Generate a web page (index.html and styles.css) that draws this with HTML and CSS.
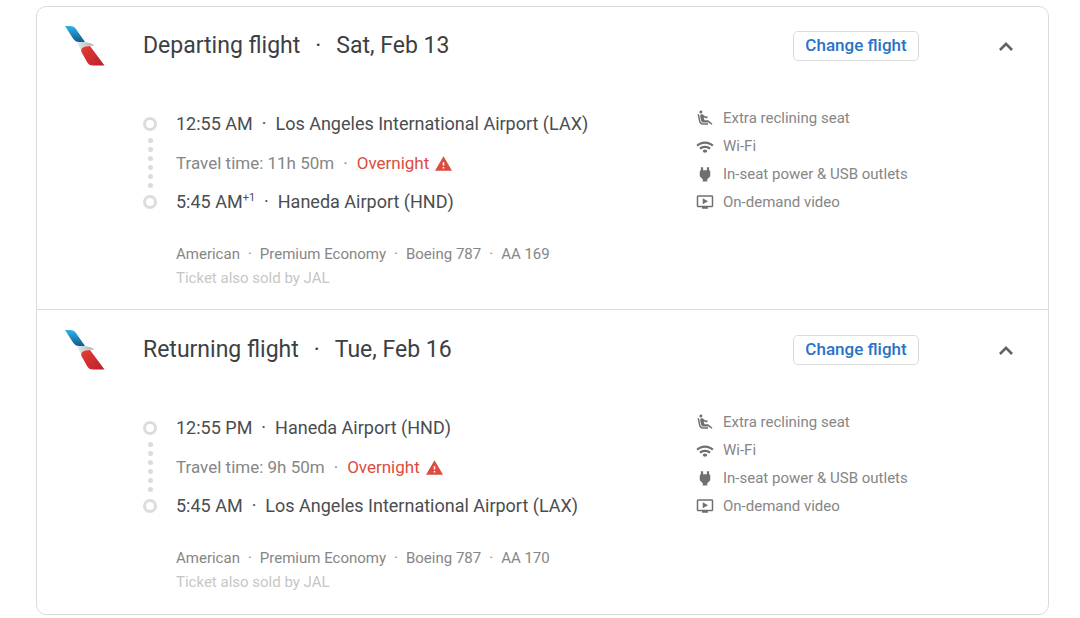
FILE: index.html
```html
<!DOCTYPE html>
<html lang="en">
<head>
    <meta charset="UTF-8">
    <meta name="viewport" content="width=device-width, initial-scale=1.0">
    <title>Selected flights</title>
    <link rel="stylesheet" href="styles.css">
</head>
<body>
    <!-- shared icons -->
    <svg class="sprite" width="0" height="0" aria-hidden="true">
        <defs>
            <linearGradient id="blue" x1="0" y1="0" x2="0" y2="1">
                <stop offset="0" stop-color="#2fb4e4"/>
                <stop offset="1" stop-color="#125a94"/>
            </linearGradient>
            <linearGradient id="red" x1="0" y1="0" x2="1" y2="1">
                <stop offset="0" stop-color="#e63e34"/>
                <stop offset="1" stop-color="#b8202a"/>
            </linearGradient>
            <linearGradient id="grey" x1="0" y1="0" x2="1" y2="0">
                <stop offset="0" stop-color="#e6e9ec"/>
                <stop offset="1" stop-color="#a4adb6"/>
            </linearGradient>
        </defs>
        <symbol id="logo" viewBox="0 0 40 40">
            <path fill="url(#blue)" d="M0 0h5c3 0 4.500 1 6 3l9 13h-6c-3 0-4-1-6-3.500z"/>
            <path fill="url(#grey)" d="M12 16.500c6-1 14-.500 17.500 3.500-5-.500-9 0-11 1.500-1 .800-2 2-2 3.500z"/>
            <path fill="url(#red)" d="M17 27c-2.500-4 1-7 8-7l14.500 19.500H28c-3 0-4.500-1-6-3.500z"/>
        </symbol>
        <symbol id="chevron" viewBox="0 0 24 24">
            <path d="M12 8l-7 7 1.900 1.900L12 11.800l5.100 5.100L19 15z"/>
        </symbol>
        <symbol id="warning" viewBox="1 2 22 19">
            <path d="M1 21h22L12 2 1 21zm12-3h-2v-2h2v2zm0-4h-2v-4h2v4z"/>
        </symbol>
        <symbol id="seat" viewBox="0 0 24 24">
            <path d="M5.350 5.640c-.900-.640-1.120-1.880-.490-2.790.630-.900 1.880-1.120 2.790-.490.900.640 1.120 1.880.490 2.790-.640.900-1.880 1.120-2.790.490zM16 19H8.930c-1.480 0-2.740-1.080-2.960-2.540L4 7H2l1.990 9.760C4.370 19.200 6.470 21 8.940 21H16v-2zm.230-4h-4.880l-1.030-4.100c1.580.890 3.280 1.540 5.150 1.220V9.990c-1.630.310-3.440-.270-4.690-1.250L9.140 7.470c-.230-.180-.490-.300-.760-.380-.320-.090-.660-.120-.990-.060h-.020c-1.230.220-2.050 1.390-1.840 2.610l1.350 5.920C7.160 16.980 8.390 18 9.830 18h6.850l3.820 3 1.500-1.500-5.770-4.500z"/>
        </symbol>
        <symbol id="wifi" viewBox="0 0 24 24">
            <path d="M12 6C7.500 6 3.500 7.700.500 10.500l2.100 2.100C5.100 10.300 8.400 9 12 9s6.900 1.300 9.400 3.600l2.100-2.100C20.500 7.700 16.500 6 12 6zm0 5.500c-3 0-5.700 1.100-7.700 3l2.100 2.100c1.500-1.300 3.400-2.100 5.600-2.100s4.100.800 5.600 2.100l2.100-2.100c-2-1.900-4.700-3-7.700-3zM12 16.500c-1.600 0-2.900 1-2.900 2.300S10.400 21 12 21s2.900-.900 2.900-2.200-1.300-2.300-2.900-2.300z"/>
        </symbol>
        <symbol id="power" viewBox="0 0 24 24">
            <path d="M17.500 7V3h-3v4h-5V3h-3v4C5.600 7 5 8 5 9v6l4 4v3h6v-3l4-4V9c0-1-.600-2-1.500-2z"/>
        </symbol>
        <symbol id="video" viewBox="0 0 24 24">
            <path d="M21 3H3c-1.110 0-2 .890-2 2v12c0 1.100.890 2 2 2h5v2h8v-2h5c1.100 0 2-.900 2-2V5c0-1.110-.900-2-2-2zm0 14H3V5h18v12zM16 11l-7 4V7z"/>
        </symbol>
    </svg>

    <main class="flights">
        <section class="flight">
            <header class="flight-header">
                <svg class="logo" role="img" aria-label="American"><use href="#logo"/></svg>
                <h2 class="title"><span>Departing flight</span><span>·</span><span>Sat, Feb 13</span></h2>
                <button class="change" type="button">Change flight</button>
                <button class="toggle" type="button" aria-label="Collapse departing flight"><svg><use href="#chevron"/></svg></button>
            </header>
            <div class="details">
                <div class="itinerary">
                    <div class="track">
                        <span class="stop"></span>
                        <span class="dots"><i></i><i></i><i></i><i></i><i></i><i></i></span>
                        <span class="stop"></span>
                    </div>
                    <div class="legs">
                        <p class="place"><span>12:55 AM</span><span>·</span><span>Los Angeles International Airport (LAX)</span></p>
                        <p class="travel"><span>Travel time: 11h 50m</span><span>·</span><span class="overnight">Overnight <svg><use href="#warning"/></svg></span></p>
                        <p class="place"><span>5:45 AM<sup>+1</sup></span><span>·</span><span>Haneda Airport (HND)</span></p>
                    </div>
                    <div class="info">
                        <p><span>American</span><span>·</span><span>Premium Economy</span><span>·</span><span>Boeing 787</span><span>·</span><span>AA 169</span></p>
                        <p class="partner">Ticket also sold by JAL</p>
                    </div>
                </div>
                <ul class="amenities">
                    <li><svg><use href="#seat"/></svg>Extra reclining seat</li>
                    <li><svg><use href="#wifi"/></svg>Wi-Fi</li>
                    <li><svg><use href="#power"/></svg>In-seat power &amp; USB outlets</li>
                    <li><svg><use href="#video"/></svg>On-demand video</li>
                </ul>
            </div>
        </section>

        <section class="flight">
            <header class="flight-header">
                <svg class="logo" role="img" aria-label="American"><use href="#logo"/></svg>
                <h2 class="title"><span>Returning flight</span><span>·</span><span>Tue, Feb 16</span></h2>
                <button class="change" type="button">Change flight</button>
                <button class="toggle" type="button" aria-label="Collapse returning flight"><svg><use href="#chevron"/></svg></button>
            </header>
            <div class="details">
                <div class="itinerary">
                    <div class="track">
                        <span class="stop"></span>
                        <span class="dots"><i></i><i></i><i></i><i></i><i></i><i></i></span>
                        <span class="stop"></span>
                    </div>
                    <div class="legs">
                        <p class="place"><span>12:55 PM</span><span>·</span><span>Haneda Airport (HND)</span></p>
                        <p class="travel"><span>Travel time: 9h 50m</span><span>·</span><span class="overnight">Overnight <svg><use href="#warning"/></svg></span></p>
                        <p class="place"><span>5:45 AM</span><span>·</span><span>Los Angeles International Airport (LAX)</span></p>
                    </div>
                    <div class="info">
                        <p><span>American</span><span>·</span><span>Premium Economy</span><span>·</span><span>Boeing 787</span><span>·</span><span>AA 170</span></p>
                        <p class="partner">Ticket also sold by JAL</p>
                    </div>
                </div>
                <ul class="amenities">
                    <li><svg><use href="#seat"/></svg>Extra reclining seat</li>
                    <li><svg><use href="#wifi"/></svg>Wi-Fi</li>
                    <li><svg><use href="#power"/></svg>In-seat power &amp; USB outlets</li>
                    <li><svg><use href="#video"/></svg>On-demand video</li>
                </ul>
            </div>
        </section>
    </main>
</body>
</html>
```

FILE: styles.css
```css
* {
    box-sizing: border-box;
}
body {
    margin: 0;
    padding: 6px 31px 3px 36px;
    background: #fff;
    color: #3c4043;
    font-family: Roboto, Arial, sans-serif;
}
h2, p, ul {
    margin: 0;
    padding: 0;
}
svg {
    display: block;
    fill: currentColor;
    flex-shrink: 0;
}
.sprite {
    position: absolute;
}

.flights {
    border: 1px solid #dadcdc;
    border-radius: 10px;
}
.flight {
    padding: 19px 28px 19px 28px;
}
.flight + .flight {
    border-top: 1px solid #dadcdc;
    padding-top: 20px;
    padding-bottom: 20px;
}

/* header row */
.flight-header {
    display: flex;
    align-items: center;
    height: 40px;
}
.logo {
    width: 40px;
    height: 40px;
    margin-right: 38px;
}
.title {
    display: flex;
    gap: 15px;
    flex: 1;
    font-size: 23px;
    font-weight: 400;
    line-height: 28px;
}
.change {
    width: 126px;
    height: 30px;
    padding: 0 0 2px;
    border: 1px solid #dadcdc;
    border-radius: 5px;
    background: #fff;
    color: #2a72c4;
    font-family: inherit;
    font-size: 17px;
    font-weight: 500;
    cursor: pointer;
}
.toggle {
    width: 28px;
    height: 28px;
    margin-left: 73px;
    padding: 2px;
    border: none;
    background: none;
    color: #5f6368;
    cursor: pointer;
}
.toggle svg {
    width: 24px;
    height: 24px;
}

/* details */
.details {
    display: grid;
    grid-template-columns: 1fr 324px;
    padding: 38px 0 0 78px;
}
.itinerary {
    display: grid;
    grid-template-columns: 14px 1fr;
    column-gap: 19px;
    padding-top: 8px;
}
.track {
    display: flex;
    flex-direction: column;
    align-items: center;
    justify-content: space-between;
    padding: 5px 0;
}
.stop {
    width: 14px;
    height: 14px;
    border: 3px solid #dcdcdc;
    border-radius: 50%;
}
.dots {
    display: flex;
    flex-direction: column;
    gap: 4px;
}
.dots i {
    width: 5px;
    height: 5px;
    border-radius: 50%;
    background: #dcdcdc;
}
.place, .travel {
    display: flex;
    align-items: center;
    gap: 9px;
}
.place {
    color: #4a4d50;
    font-size: 18px;
    line-height: 24px;
}
.place sup {
    font-size: 11px;
    line-height: 1;
}
.travel {
    height: 54px;
    color: #868686;
    font-size: 17px;
}
.overnight {
    display: flex;
    align-items: center;
    gap: 6px;
    color: #dc4c40;
}
.overnight svg {
    width: 17px;
    height: 15px;
}
.info {
    grid-column: 2;
    padding-top: 28px;
    color: #868686;
    font-size: 15px;
    line-height: 24px;
}
.info p {
    display: flex;
    gap: 8px;
}
.info .partner {
    color: #c6c6c6;
}

.amenities {
    list-style: none;
    color: #868686;
    font-size: 15px;
    line-height: 28px;
}
.amenities li {
    display: flex;
    align-items: center;
    gap: 9px;
}
.amenities svg {
    width: 18px;
    height: 18px;
    color: #707070;
}
```
